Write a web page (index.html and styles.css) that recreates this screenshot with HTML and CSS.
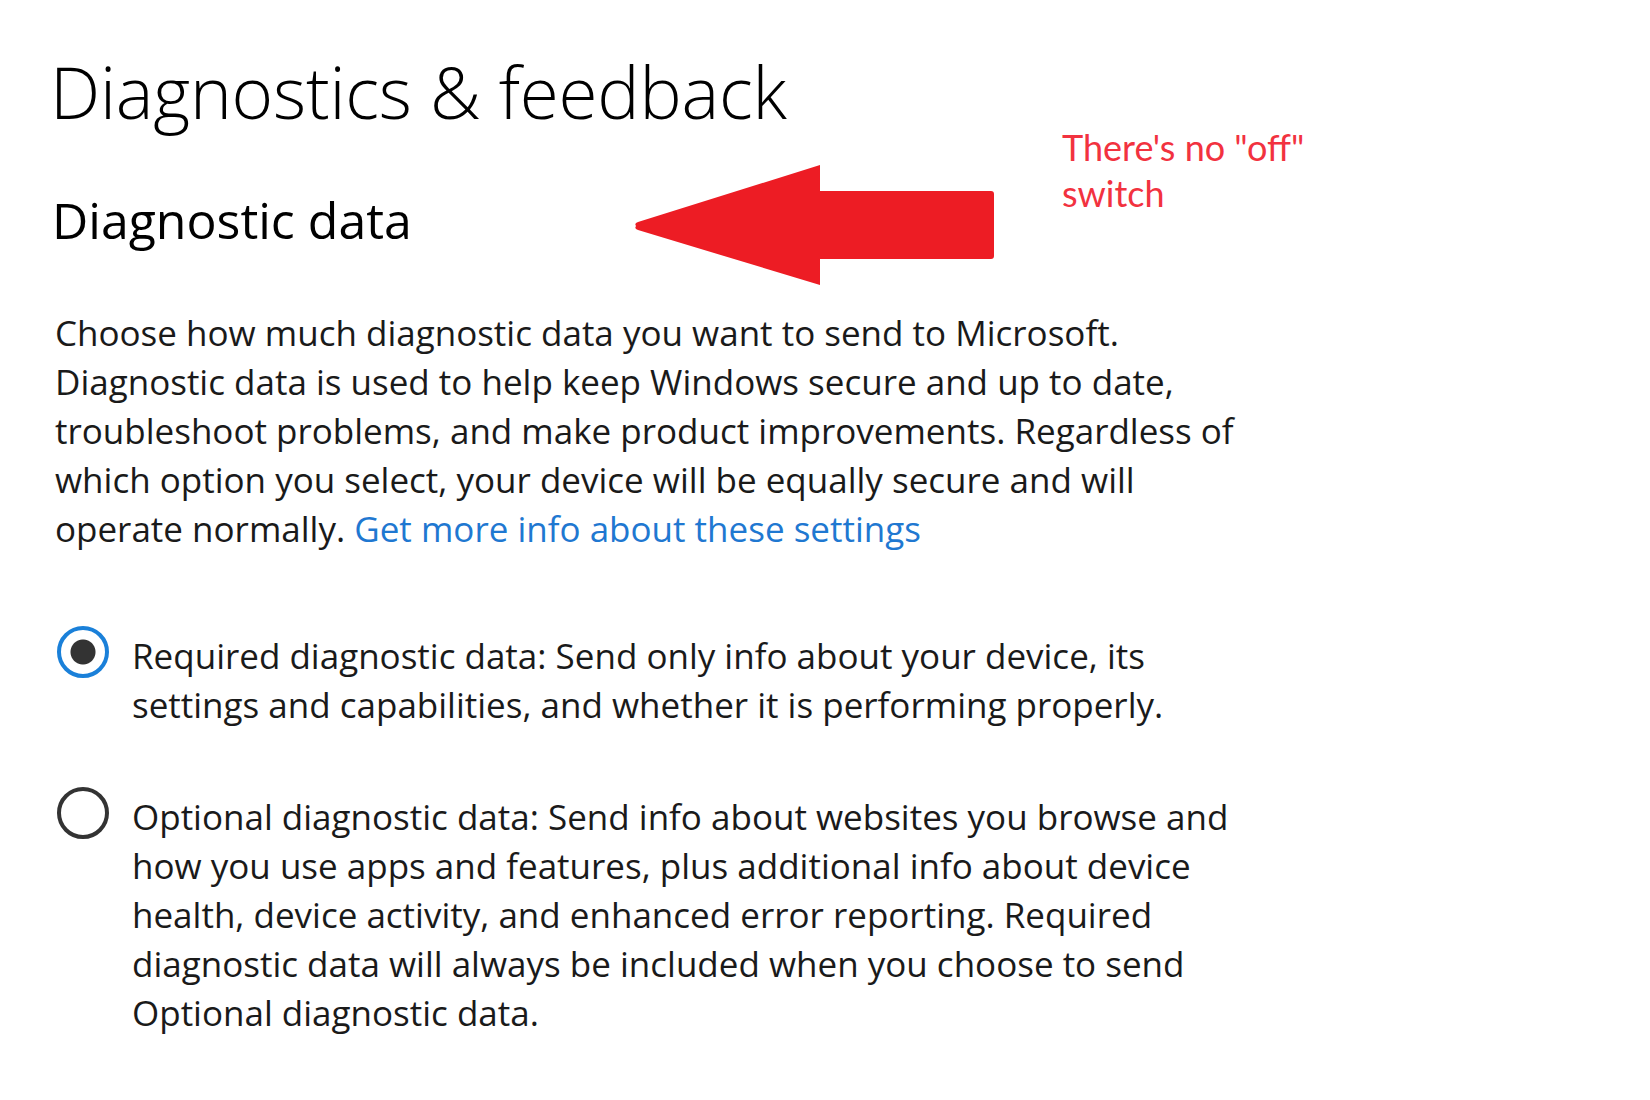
FILE: index.html
```html
<!DOCTYPE html>
<html lang="en">
<head>
<meta charset="utf-8">
<title>Diagnostics &amp; feedback</title>
<link rel="stylesheet" href="styles.css">
</head>
<body>
<main class="page">
  <h1 class="page-title">Diagnostics &amp; feedback</h1>
  <h2 class="section-title">Diagnostic data</h2>
  <p class="intro">Choose how much diagnostic data you want to send to Microsoft. Diagnostic data is used to help keep Windows secure and up to date, troubleshoot problems, and make product improvements. Regardless of which option you select, your device will be equally secure and will operate normally. <a class="link" href="#">Get more info about these settings</a></p>
  <div class="options">
    <label class="option option-first">
      <span class="radio radio-checked"></span>
      <span class="option-text">Required diagnostic data: Send only info about your device, its settings and capabilities, and whether it is performing properly.</span>
    </label>
    <label class="option option-second">
      <span class="radio"></span>
      <span class="option-text">Optional diagnostic data: Send info about websites you browse and how you use apps and features, plus additional info about device health, device activity, and enhanced error reporting. Required diagnostic data will always be included when you choose to send Optional diagnostic data.</span>
    </label>
  </div>
</main>
<svg class="arrow" width="380" height="140" viewBox="0 0 380 140" aria-hidden="true">
  <path d="M4 61 Q2 58 6 57 L188 0 L188 26 L359 26 Q362 26 362 29 L362 91 Q362 94 359 94 L188 94 L188 120 L6 65 Q2 64 4 61 Z" fill="#ed1c24"/>
</svg>
<div class="note">There's no "off"<br>switch</div>
</body>
</html>
```

FILE: styles.css
```css
html, body {
  margin: 0;
  padding: 0;
  background: #ffffff;
}

body {
  width: 1650px;
  min-height: 1100px;
  position: relative;
  font-family: "Open Sans", "Noto Sans", "Liberation Sans", sans-serif;
  color: #1a1a1a;
}

.page {
  padding: 0 0 0 52px;
  width: 1200px;
}

.page-title {
  margin: 50px 0 0 -2px;
  font-size: 71px;
  font-weight: 300;
  line-height: 84px;
  letter-spacing: -0.2px;
  color: #000;
}

.section-title {
  margin: 56px 0 0 0;
  font-size: 50px;
  font-weight: 400;
  line-height: 60px;
  color: #000;
}

.intro {
  margin: 58px 0 0 3px;
  font-size: 35px;
  line-height: 49px;
}

.link {
  color: #1f78d1;
  text-decoration: none;
}

.options {
  display: flex;
  flex-direction: column;
  gap: 63px;
  margin-top: 78px;
}

.option {
  display: flex;
  align-items: flex-start;
  gap: 23px;
  font-size: 35px;
  line-height: 49px;
}

.radio {
  flex: none;
  box-sizing: border-box;
  width: 52px;
  height: 52px;
  margin: -5px 0 0 5px;
  border: 4px solid #333;
  border-radius: 50%;
}

.radio-checked {
  border-color: #1a80d9;
  background: radial-gradient(circle, #333 0 12px, transparent 13px);
}

.option-text {
  flex: 1;
}

.arrow {
  position: absolute;
  left: 632px;
  top: 165px;
}

.note {
  position: absolute;
  left: 1062px;
  top: 124px;
  font-family: "Lato", "Open Sans", sans-serif;
  font-size: 36px;
  line-height: 46px;
  color: #f2323f;
}
```
